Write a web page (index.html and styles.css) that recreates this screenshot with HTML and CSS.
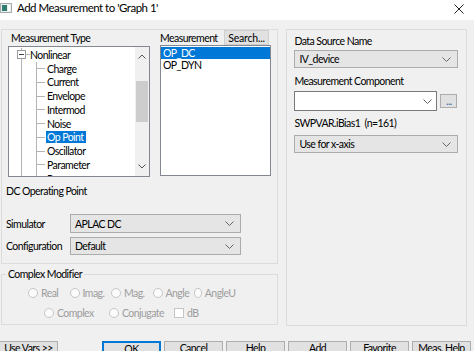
FILE: index.html
```html
<!DOCTYPE html>
<html lang="en">
<head>
    <meta charset="UTF-8">
    <meta name="viewport" content="width=device-width, initial-scale=1.0">
    <title>Add Measurement to 'Graph 1'</title>
    <link rel="stylesheet" href="styles.css">
</head>
<body>
    <div class="titlebar">
        <svg class="app-icon" width="12" height="10" viewBox="0 0 12 10">
            <rect x="0.5" y="0.5" width="11" height="9" fill="#e9eeee" stroke="#a3acab"/>
            <rect x="2" y="2" width="5" height="6" fill="#2e7d70"/>
            <rect x="8" y="2" width="2" height="6" fill="#ffffff"/>
        </svg>
        <span class="title">Add Measurement to 'Graph 1'</span>
        <svg class="close" width="10" height="10" viewBox="0 0 10 10">
            <path d="M0.5 0.5 L9.5 9.5 M9.5 0.5 L0.5 9.5" stroke="#222" stroke-width="1"/>
        </svg>
    </div>

    <div class="dialog">
        <div class="left">
            <div class="group type-group">
                <div class="pickers">
                    <div class="tree-col">
                        <div class="caption">Measurement Type</div>
                        <div class="tree">
                            <div class="tree-body">
                                <div class="root-line">
                                    <div class="node">
                                        <span class="expander"></span>
                                        <span class="tick short"></span>
                                        <span class="label">Nonlinear</span>
                                    </div>
                                    <ul class="children">
                                        <li><span class="tick"></span><span class="label">Charge</span></li>
                                        <li><span class="tick"></span><span class="label">Current</span></li>
                                        <li><span class="tick"></span><span class="label">Envelope</span></li>
                                        <li><span class="tick"></span><span class="label">Intermod</span></li>
                                        <li><span class="tick"></span><span class="label">Noise</span></li>
                                        <li><span class="tick"></span><span class="label selected">Op Point</span></li>
                                        <li><span class="tick"></span><span class="label">Oscillator</span></li>
                                        <li><span class="tick"></span><span class="label">Parameter</span></li>
                                        <li><span class="tick"></span><span class="label">Power</span></li>
                                    </ul>
                                </div>
                            </div>
                            <div class="scrollbar">
                                <svg class="arrow" width="8" height="5" viewBox="0 0 8 5"><polyline points="0.5,4.5 4,1 7.5,4.5" fill="none" stroke="#555"/></svg>
                                <div class="track"><div class="thumb"></div></div>
                                <svg class="arrow" width="8" height="5" viewBox="0 0 8 5"><polyline points="0.5,0.5 4,4 7.5,0.5" fill="none" stroke="#555"/></svg>
                            </div>
                        </div>
                    </div>
                    <div class="list-col">
                        <div class="list-head">
                            <span class="caption">Measurement</span>
                            <button class="btn search">Search...</button>
                        </div>
                        <ul class="listbox">
                            <li class="selected">OP_DC</li>
                            <li>OP_DYN</li>
                        </ul>
                    </div>
                </div>

                <div class="op-title">DC Operating Point</div>

                <div class="field">
                    <span class="field-label">Simulator</span>
                    <div class="dropdown tall">APLAC DC<svg width="9" height="5" viewBox="0 0 9 5"><polyline points="0.5,0.5 4.5,4.5 8.5,0.5" fill="none" stroke="#666"/></svg></div>
                </div>
                <div class="field">
                    <span class="field-label">Configuration</span>
                    <div class="dropdown">Default<svg width="9" height="5" viewBox="0 0 9 5"><polyline points="0.5,0.5 4.5,4.5 8.5,0.5" fill="none" stroke="#666"/></svg></div>
                </div>
            </div>

            <fieldset class="modifier">
                <legend>Complex Modifier</legend>
                <div class="opts first">
                    <span class="opt"><span class="radio"></span>Real</span>
                    <span class="opt"><span class="radio"></span>Imag.</span>
                    <span class="opt"><span class="radio"></span>Mag.</span>
                    <span class="opt"><span class="radio"></span>Angle</span>
                    <span class="opt"><span class="radio"></span>AngleU</span>
                </div>
                <div class="opts second">
                    <span class="opt"><span class="radio"></span>Complex</span>
                    <span class="opt"><span class="radio"></span>Conjugate</span>
                    <span class="opt"><span class="check"></span>dB</span>
                </div>
            </fieldset>
        </div>

        <div class="group source-group">
            <div class="caption">Data Source Name</div>
            <div class="dropdown">IV_device<svg width="9" height="5" viewBox="0 0 9 5"><polyline points="0.5,0.5 4.5,4.5 8.5,0.5" fill="none" stroke="#666"/></svg></div>

            <div class="caption gap">Measurement Component</div>
            <div class="combo-row">
                <div class="combo"><svg width="9" height="5" viewBox="0 0 9 5"><polyline points="0.5,0.5 4.5,4.5 8.5,0.5" fill="none" stroke="#666"/></svg></div>
                <button class="btn dots">...</button>
            </div>

            <div class="caption sweep">SWPVAR.iBias1&nbsp; (n=161)</div>
            <div class="dropdown axis">Use for x-axis<svg width="9" height="5" viewBox="0 0 9 5"><polyline points="0.5,0.5 4.5,4.5 8.5,0.5" fill="none" stroke="#666"/></svg></div>
        </div>
    </div>

    <div class="buttons">
        <button class="btn vars">Use Vars &gt;&gt;</button>
        <div class="actions">
            <button class="btn default">OK</button>
            <button class="btn">Cancel</button>
            <button class="btn">Help</button>
            <button class="btn">Add</button>
            <button class="btn">Favorite</button>
            <button class="btn">Meas. Help</button>
        </div>
    </div>
</body>
</html>
```

FILE: styles.css
```css
/* Dialog frame */
body {
    margin: 0;
    height: 351px;
    overflow: hidden;
    background-color: #f0f0f0;
    color: #000;
    font-family: Lato, "Noto Sans", sans-serif;
    font-size: 10.5px;
    letter-spacing: -0.55px;
}

ul {
    list-style: none;
    margin: 0;
    padding: 0;
}

.titlebar {
    height: 20px;
    background-color: #fff;
    display: flex;
    align-items: flex-start;
    padding: 3px 10px 0 0;
    box-sizing: border-box;
}

.title {
    margin-left: 5px;
    margin-top: -2px;
    line-height: 14px;
    font-size: 11.5px;
    letter-spacing: -0.5px;
    flex: 1;
}

.close {
    margin-top: 1px;
}

.dialog {
    display: flex;
    gap: 8px;
    padding: 9px 7px 0 1px;
}

.left {
    width: 278px;
    display: flex;
    flex-direction: column;
}

.group {
    border: 1px solid #dcdcdc;
    box-sizing: border-box;
}

/* Measurement type / measurement pickers */
.type-group {
    height: 235px;
    padding: 0 0 0 4px;
}

.pickers {
    display: flex;
    gap: 10px;
    margin-left: 2px;
}

.caption {
    height: 16px;
    line-height: 16px;
    padding-left: 3px;
}

.tree-col {
    width: 142px;
}

.tree {
    height: 131px;
    border: 1px solid #828790;
    background-color: #fff;
    box-sizing: border-box;
    display: flex;
    overflow: hidden;
}

.tree-body {
    flex: 1;
    overflow: hidden;
    padding-top: 1px;
}

.root-line {
    margin-left: 12px;
    border-left: 1px solid #b4b4b4;
    height: 100%;
}

.node,
.children li {
    height: 13.75px;
    display: flex;
    align-items: center;
    white-space: nowrap;
}

.expander {
    width: 9px;
    height: 9px;
    margin-left: -5px;
    border: 1px solid #9a9a9a;
    background-color: #fff;
    box-sizing: border-box;
    display: flex;
    align-items: center;
    justify-content: center;
}

.expander::after {
    content: "";
    width: 5px;
    height: 1px;
    background-color: #444;
}

.tick {
    width: 8px;
    height: 1px;
    background-color: #b4b4b4;
}

.tick.short {
    width: 4px;
}

.label {
    padding: 0 2px 0 1px;
    line-height: 12px;
}

.node .label {
    padding-left: 0;
}

.children {
    margin-left: 14px;
    border-left: 1px solid #b4b4b4;
}

.children .label {
    margin-left: 1px;
}

.selected {
    background-color: #0078d7;
    color: #fff;
}

.scrollbar {
    width: 14px;
    background-color: #f0f0f0;
    display: flex;
    flex-direction: column;
    align-items: center;
}

.arrow {
    margin: 7px 0;
}

.track {
    flex: 1;
    width: 100%;
    padding: 15px 1px 0;
    box-sizing: border-box;
}

.thumb {
    height: 41px;
    background-color: #cdcdcd;
}

.list-col {
    width: 111px;
}

.list-head {
    display: flex;
    justify-content: space-between;
    align-items: flex-start;
    height: 15px;
    padding-right: 2px;
}

.list-head .caption {
    padding-left: 0;
}

.btn {
    font-family: inherit;
    font-size: 10.5px;
    letter-spacing: -0.55px;
    color: #000;
    background-color: #e1e1e1;
    border: 1px solid #adadad;
    padding: 0;
    margin: 0;
}

.search {
    width: 45px;
    height: 15px;
    line-height: 12px;
    letter-spacing: -0.2px;
    border-color: #cfcfcf;
}

.listbox {
    height: 131px;
    border: 1px solid #828790;
    background-color: #fff;
    box-sizing: border-box;
    padding-top: 1px;
}

.listbox li {
    height: 12px;
    line-height: 12px;
    padding-left: 2px;
}

/* Simulator settings */
.op-title {
    margin-top: 7px;
    line-height: 14px;
}

.field {
    display: flex;
    align-items: center;
    margin-top: 4px;
}

.op-title + .field {
    margin-top: 16px;
}

.field-label {
    width: 64px;
}

.dropdown {
    height: 18px;
    border: 1px solid #acacac;
    background-color: #e5e5e5;
    box-sizing: border-box;
    display: flex;
    align-items: center;
    justify-content: space-between;
    padding: 0 6px 0 4px;
}

.field .dropdown {
    width: 171px;
}

.dropdown.tall {
    height: 19px;
}

/* Complex modifier */
.modifier {
    margin: 3px 0 0;
    padding: 0 0 1px;
    height: 58px;
    border: 1px solid #dcdcdc;
    box-sizing: border-box;
    color: #9d9d9d;
}

.modifier legend {
    color: #000;
    padding: 0 2px;
    margin-left: 4px;
    line-height: 14px;
}

.opts {
    display: flex;
    height: 20px;
    align-items: center;
}

.opts.first {
    padding-left: 26px;
    margin-top: 2px;
}

.opts.first .opt {
    width: 41.5px;
}

.opts.second {
    padding-left: 42px;
}

.opts.second .opt {
    width: 65px;
}

.opt {
    display: flex;
    align-items: center;
    white-space: nowrap;
}

.radio,
.check {
    width: 10px;
    height: 10px;
    border: 1px solid #c6c6c6;
    background-color: #fbfbfb;
    box-sizing: border-box;
    margin-right: 3px;
}

.radio {
    border-radius: 50%;
}

.check {
    background-color: #fff;
}

/* Data source */
.source-group {
    width: 181px;
    height: 297px;
    padding: 0 8px 0 7px;
}

.source-group .caption {
    padding-left: 0;
    margin-top: 4px;
    height: 14px;
    line-height: 14px;
    margin-bottom: 2px;
}

.source-group .caption.gap {
    margin-top: 6px;
    margin-bottom: 3px;
}

.source-group .caption.sweep {
    margin-top: 5px;
    margin-bottom: 5px;
}

.combo-row {
    display: flex;
    align-items: center;
    gap: 3px;
}

.combo {
    width: 143px;
    height: 20px;
    border: 1px solid #7a7a7a;
    background-color: #fff;
    box-sizing: border-box;
    display: flex;
    align-items: center;
    justify-content: flex-end;
    padding-right: 4px;
}

.dots {
    width: 17px;
    height: 14px;
    line-height: 8px;
    color: #3a6ea5;
}

/* Bottom buttons */
.buttons {
    display: flex;
    margin-top: 15px;
    margin-left: -1px;
}

.buttons .btn {
    width: 59px;
    height: 22px;
    line-height: 12px;
    padding-bottom: 10px;
}

.actions {
    display: flex;
    gap: 3px;
    margin-left: 44px;
}

.btn.default {
    border: 2px solid #0078d7;
}
```
